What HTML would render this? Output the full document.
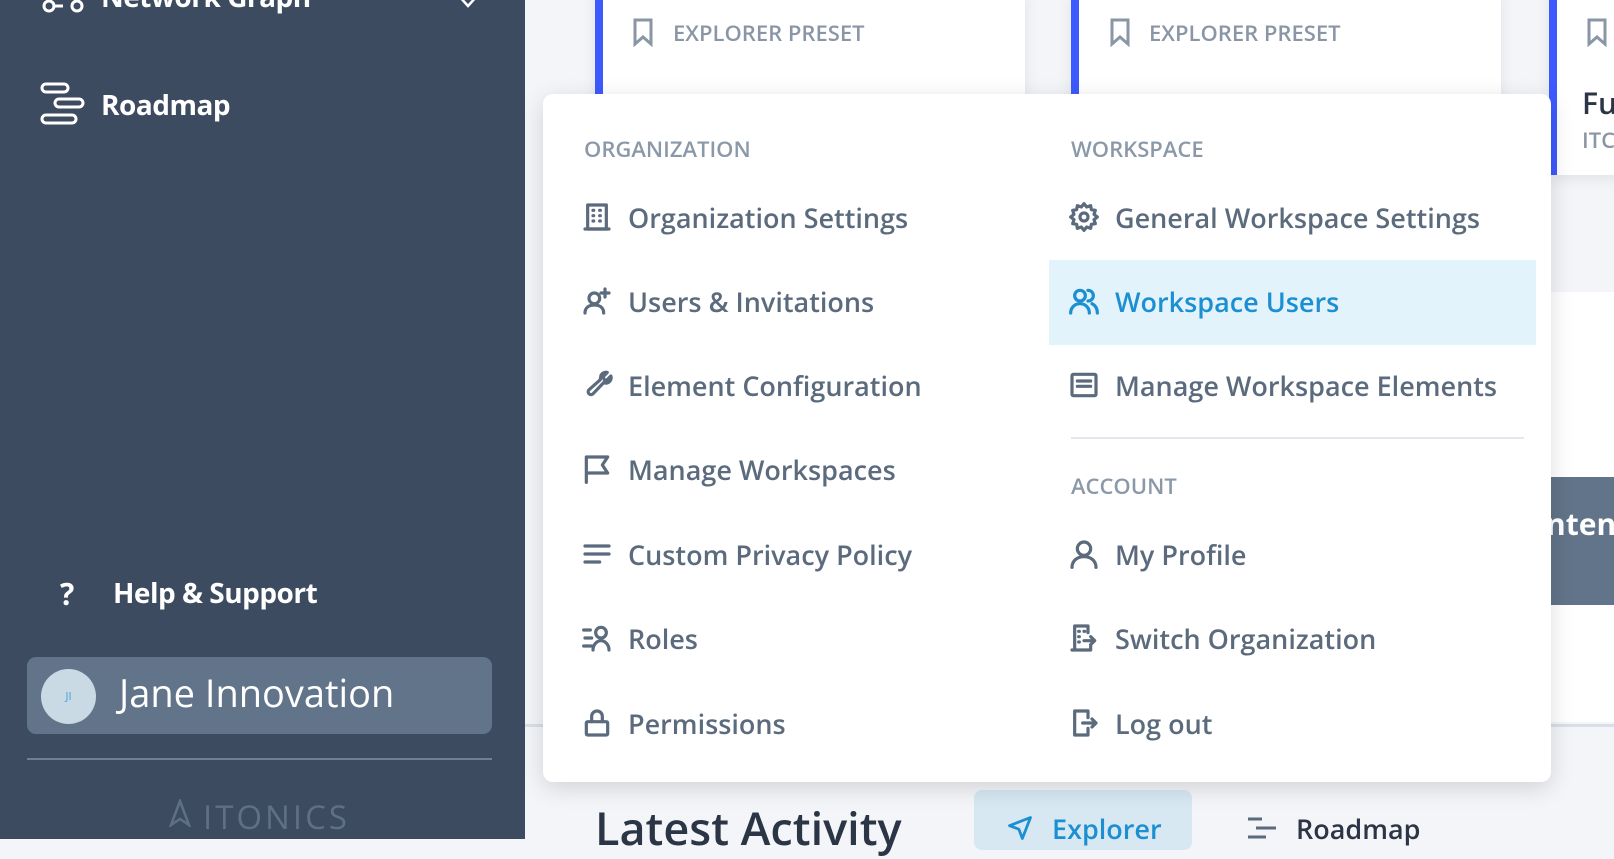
<!DOCTYPE html>
<html><head><meta charset="utf-8"><style>
*{margin:0;padding:0;box-sizing:border-box}
body{width:1614px;height:839px;overflow:hidden;position:relative;background:#f3f5f8;font-family:"Open Sans","Liberation Sans",sans-serif}
.abs{position:absolute}
#side{left:0;top:0;width:525px;height:839px;background:#3d4b60}
.sb{color:#fff;font-weight:bold;font-size:28px;letter-spacing:-0.5px}
.card{background:#fff;border-left:8px solid #3d5afe;box-shadow:0 4px 14px rgba(0,0,0,.08)}
.pre{color:#8a96a6;font-size:22px;font-weight:600}
#menu{left:543px;top:94px;width:1008px;height:688px;background:#fff;border-radius:10px;box-shadow:0 6px 24px rgba(0,0,0,.14)}
.hd{color:#8a98a8;font-size:22px;font-weight:600}
.it{position:absolute;height:40px;display:flex;align-items:center;color:#5b6b7d;font-size:27px;font-weight:600;white-space:nowrap}
.it svg{width:32px;height:32px;margin-right:15px;flex:none}
.it svg *{fill:none;stroke:#5b6b7d;stroke-width:2.4;stroke-linecap:round;stroke-linejoin:round}
.hl{color:#1b8fd2}
.hl svg *{stroke:#1b8fd2}
</style></head><body>
<div id="side" class="abs">
 <svg class="abs" style="left:41px;top:-6px" width="46" height="24" viewBox="0 0 46 24"><circle cx="8" cy="12" r="5" fill="none" stroke="#fff" stroke-width="3"/><circle cx="36" cy="12" r="5" fill="none" stroke="#fff" stroke-width="3"/><path d="M14 12h8" stroke="#fff" stroke-width="3"/></svg>
 <div class="abs sb" style="left:101px;top:-22px">Network Graph</div>
 <svg class="abs" style="left:456px;top:-6px" width="24" height="16" viewBox="0 0 24 16"><path d="M3 2l9 10 9-10" stroke="#fff" stroke-width="2.5" fill="none"/></svg>
 <svg class="abs" style="left:40px;top:82px" width="46" height="46" viewBox="0 0 46 46"><rect x="2" y="2" width="26" height="8" rx="4" fill="none" stroke="#fff" stroke-width="3"/><rect x="15" y="17" width="28" height="8" rx="4" fill="none" stroke="#fff" stroke-width="3"/><rect x="2" y="33" width="34" height="8" rx="4" fill="none" stroke="#fff" stroke-width="3"/></svg>
 <div class="abs sb" style="left:101px;top:86px">Roadmap</div>
 <div class="abs sb" style="left:60px;top:573px;font-size:30px">?</div>
 <div class="abs sb" style="left:113px;top:574px">Help &amp; Support</div>
 <div class="abs" style="left:27px;top:657px;width:465px;height:77px;background:#627489;border-radius:9px"></div>
 <div class="abs" style="left:41px;top:669px;width:55px;height:55px;border-radius:50%;background:#c9dae4;color:#3aa0d8;font-size:11px;text-align:center;line-height:55px">JI</div>
 <div class="abs" style="left:119px;top:667px;color:#fff;font-size:38px;font-weight:400">Jane Innovation</div>
 <div class="abs" style="left:27px;top:758px;width:465px;height:2px;background:#6f7f92"></div>
 <svg class="abs" style="left:168px;top:799px" width="24" height="28" viewBox="0 0 24 28"><path d="M12 2L3 26l9-6 9 6z" fill="none" stroke="#5f7084" stroke-width="2.5"/></svg>
 <div class="abs" style="left:203px;top:794px;color:#5f7084;font-size:33px;letter-spacing:3px">ITONICS</div>
</div>

<div class="abs card" style="left:595px;top:-10px;width:430px;height:185px"></div>
<div class="abs card" style="left:1071px;top:-10px;width:430px;height:185px"></div>
<div class="abs card" style="left:1549px;top:-10px;width:80px;height:185px"></div>
<svg class="abs" style="left:632px;top:17px" width="22" height="30" viewBox="0 0 22 30"><path d="M3 3h16v24l-8-7-8 7z" fill="none" stroke="#8a96a6" stroke-width="3"/></svg>
<div class="abs pre" style="left:673px;top:18px">EXPLORER PRESET</div>
<svg class="abs" style="left:1109px;top:17px" width="22" height="30" viewBox="0 0 22 30"><path d="M3 3h16v24l-8-7-8 7z" fill="none" stroke="#8a96a6" stroke-width="3"/></svg>
<div class="abs pre" style="left:1149px;top:18px">EXPLORER PRESET</div>
<svg class="abs" style="left:1586px;top:17px" width="22" height="30" viewBox="0 0 22 30"><path d="M3 3h16v24l-8-7-8 7z" fill="none" stroke="#8a96a6" stroke-width="3"/></svg>
<div class="abs" style="left:1582px;top:82px;font-size:30px;color:#2b3545;font-weight:600">Fu</div>
<div class="abs" style="left:1582px;top:125px;font-size:22px;color:#8a96a6;font-weight:600">ITC</div>
<div class="abs" style="left:1551px;top:292px;width:70px;height:430px;background:#fff"></div>
<div class="abs" style="left:1551px;top:477px;width:70px;height:128px;background:#627489"></div>
<div class="abs" style="left:1546px;top:503px;font-size:30px;color:#fff;font-weight:bold">nten</div>
<div class="abs" style="left:525px;top:724px;width:1100px;height:3px;background:#d9dfe7"></div>
<div class="abs" style="left:595px;top:798px;font-size:45px;color:#2b3545;font-weight:600">Latest Activity</div>
<div class="abs" style="left:974px;top:790px;width:218px;height:60px;background:#d7e8f3;border-radius:8px"></div>
<svg class="abs" style="left:1006px;top:814px" width="28" height="28" viewBox="0 0 24 24"><path d="M21 3L3 10l8 3 3 8z" fill="none" stroke="#1b8fd2" stroke-width="2.4" stroke-linejoin="round"/></svg>
<div class="abs" style="left:1052px;top:810px;font-size:27px;color:#1b8fd2;font-weight:600">Explorer</div>
<svg class="abs" style="left:1246px;top:816px" width="34" height="26" viewBox="0 0 34 26"><path d="M2 3h14M10 12h20M2 21h18" stroke="#5b6b7d" stroke-width="3"/></svg>
<div class="abs" style="left:1296px;top:810px;font-size:27px;color:#2b3545;font-weight:600">Roadmap</div>

<div id="menu" class="abs">
 <div class="abs hd" style="left:41px;top:40px">ORGANIZATION</div>
 <div class="abs hd" style="left:528px;top:40px">WORKSPACE</div>
 <div class="abs" style="left:506px;top:166px;width:487px;height:85px;background:#e3f3fb"></div>
 <div class="abs" style="left:528px;top:343px;width:453px;height:2px;background:#e2e8ee"></div>
 <div class="abs hd" style="left:528px;top:377px">ACCOUNT</div>

 <div class="it" style="left:38px;top:103px"><svg viewBox="0 0 24 24"><rect x="5" y="3" width="14" height="18"/><path d="M3 21h18M9 7h.5M14 7h.5M9 11h.5M14 11h.5M9 15h.5M14 15h.5"/></svg>Organization Settings</div>
 <div class="it" style="left:38px;top:187px"><svg viewBox="0 0 24 24"><circle cx="10" cy="10" r="4"/><path d="M3 21c0-4 3-6 7-6s7 2 7 6M18 3v6M15 6h6"/></svg>Users &amp; Invitations</div>
 <div class="it" style="left:38px;top:271px"><svg viewBox="0 0 24 24"><path d="M14.7 6.3a4 4 0 0 1 5-3.7l-3 3 .5 2.2 2.2.5 3-3a4 4 0 0 1-5.4 4.9L9 18.6a2.1 2.1 0 0 1-3-3l8.4-7.5z"/></svg>Element Configuration</div>
 <div class="it" style="left:38px;top:355px"><svg viewBox="0 0 24 24"><path d="M4 22V3h16l-4 6 4 6H4"/></svg>Manage Workspaces</div>
 <div class="it" style="left:38px;top:440px"><svg viewBox="0 0 24 24"><path d="M3 6h18M3 12h18M3 18h11"/></svg>Custom Privacy Policy</div>
 <div class="it" style="left:38px;top:524px"><svg viewBox="0 0 24 24"><path d="M2 6h5M3 12h5M2 18h6"/><circle cx="15" cy="8" r="4"/><path d="M9 21c0-4 3-7 6-7s6 3 6 7"/></svg>Roles</div>
 <div class="it" style="left:38px;top:609px"><svg viewBox="0 0 24 24"><rect x="4" y="11" width="16" height="10" rx="1"/><path d="M8 11V7a4 4 0 0 1 8 0v4"/></svg>Permissions</div>

 <div class="it" style="left:525px;top:103px"><svg viewBox="0 0 24 24"><circle cx="12" cy="12" r="3"/><path d="M12 2l2 2.5 3-1 .5 3 3 .5-1 3L22 12l-2.5 2 1 3-3 .5-.5 3-3-1L12 22l-2-2.5-3 1-.5-3-3-.5 1-3L2 12l2.5-2-1-3 3-.5.5-3 3 1z"/></svg>General Workspace Settings</div>
 <div class="it hl" style="left:525px;top:187px"><svg viewBox="0 0 24 24"><circle cx="9" cy="8" r="4"/><path d="M2 21c0-4 3-7 7-7s7 3 7 7M15 4a4 4 0 0 1 0 8M18 14c2 1 4 3 4 7"/></svg>Workspace Users</div>
 <div class="it" style="left:525px;top:271px"><svg viewBox="0 0 24 24"><rect x="3" y="4" width="18" height="16" rx="1"/><path d="M7 9h10M7 13h10"/></svg>Manage Workspace Elements</div>
 <div class="it" style="left:525px;top:440px"><svg viewBox="0 0 24 24"><circle cx="12" cy="8" r="5"/><path d="M3 22c0-5 4-8 9-8s9 3 9 8"/></svg>My Profile</div>
 <div class="it" style="left:525px;top:524px"><svg viewBox="0 0 24 24"><path d="M5 21V3h10v5M3 21h14v-3M8 7h.5M12 7h.5M8 11h.5M8 15h.5M12 14h8M17 11l3 3-3 3"/></svg>Switch Organization</div>
 <div class="it" style="left:525px;top:609px"><svg viewBox="0 0 24 24"><path d="M15 8V3H5v18h10v-5M11 12h10M18 9l3 3-3 3"/></svg>Log out</div>
</div>
</body></html>
